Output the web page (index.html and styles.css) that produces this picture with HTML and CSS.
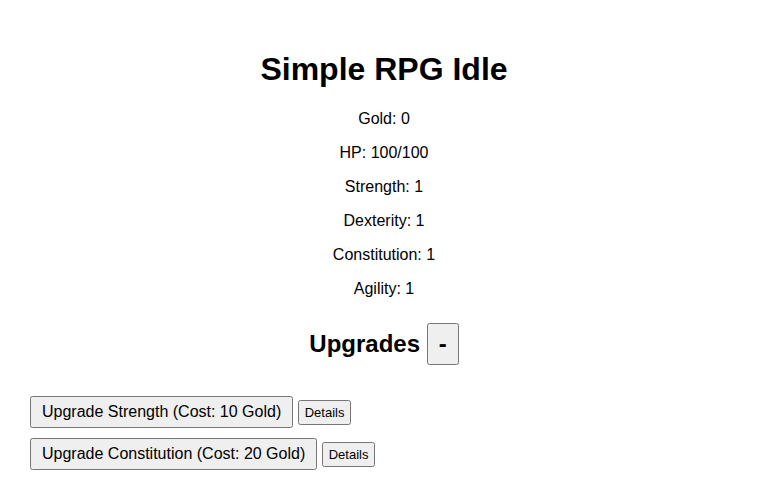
FILE: index.html
```html
<!DOCTYPE html>
<html lang="en">
<head>
    <meta charset="UTF-8">
    <meta name="viewport" content="width=device-width, initial-scale=1.0">
    <title>Simple RPG Idle</title>
    <link rel="stylesheet" href="styles.css">
</head>
<body>

<h1>Simple RPG Idle</h1>

<div class="stats">
    <p>Gold: <span id="gold">0</span></p>
    <p>HP: <span id="hp">100</span>/<span id="max-hp">100</span></p>
    <p>Strength: <span id="strength">1</span></p>
    <p>Dexterity: <span id="dexterity">1</span></p>
    <p>Constitution: <span id="constitution">1</span></p>
    <p>Agility: <span id="agility">1</span></p>
</div>

<h2>Upgrades <button class="toggle" id="toggle-upgrades">-</button></h2>

<div class="upgrades" id="upgrades">
    <div class="upgrade-row">
        <button class="upgrade">Upgrade Strength (Cost: 10 Gold)</button>
        <button class="details">Details</button>
    </div>
    <div class="upgrade-row">
        <button class="upgrade">Upgrade Constitution (Cost: 20 Gold)</button>
        <button class="details">Details</button>
    </div>
    <div class="upgrade-row">
        <button class="upgrade">Upgrade Dexterity (Cost: 15 Gold)</button>
        <button class="details">Details</button>
    </div>
    <div class="upgrade-row">
        <button class="upgrade">Upgrade Agility (Cost: 15 Gold)</button>
        <button class="details">Details</button>
    </div>
</div>

</body>
</html>
```

FILE: styles.css
```css
body {
    font-family: "Liberation Sans", Arial, sans-serif;
    margin: 0;
    padding: 30px;
    color: #000;
    background-color: #fff;
}
h1 {
    text-align: center;
    font-size: 32px;
}
.stats {
    text-align: center;
}
h2 {
    text-align: center;
    font-size: 24px;
    margin-top: 25px;
}
.toggle {
    font: inherit;
    padding: 5px 10px;
}
.upgrades {
    padding-top: 11px;
}
.upgrade-row {
    margin-bottom: 10px;
}
.upgrade {
    font-family: inherit;
    font-size: 16px;
    padding: 5px 10px;
}
.details {
    font-family: inherit;
    font-size: 13px;
    padding: 3px 5px;
}
```
